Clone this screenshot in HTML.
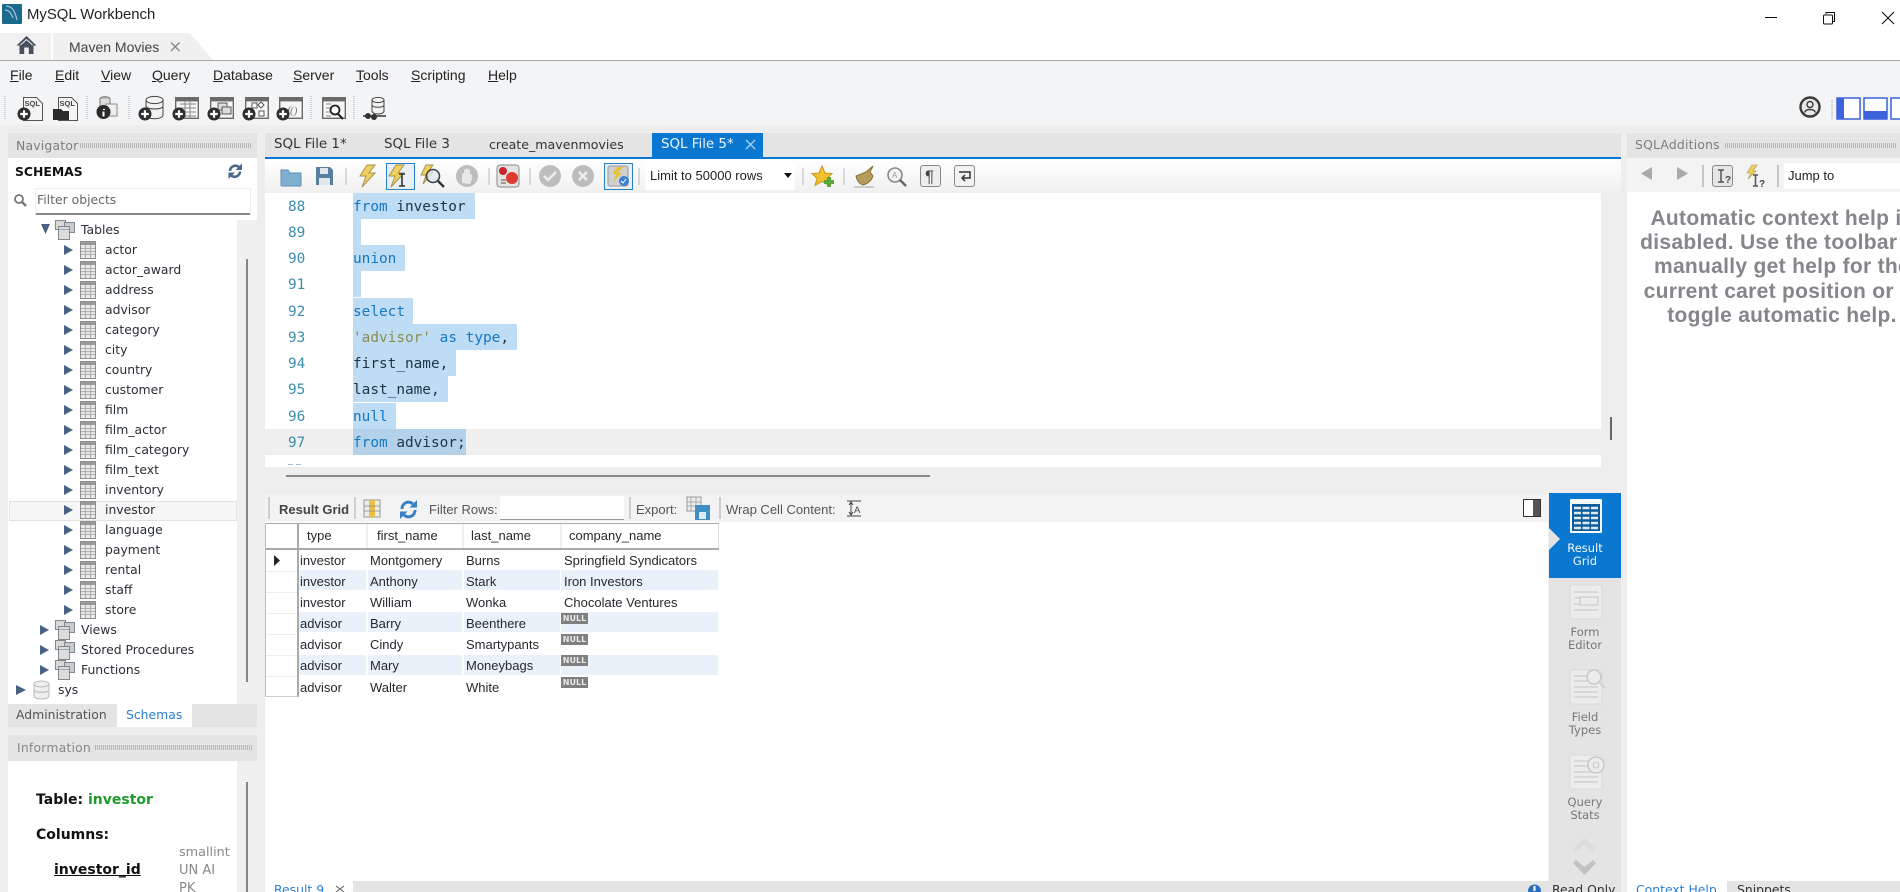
<!DOCTYPE html>
<html><head><meta charset="utf-8"><title>MySQL Workbench</title>
<style>
html,body{margin:0;padding:0;background:#fff}
#r{position:relative;width:1900px;height:892px;overflow:hidden;background:#eeeeef;font-family:"DejaVu Sans",sans-serif;font-size:12.4px;color:#2a2f36;filter:blur(.35px)}
.b{position:absolute}
.t{position:absolute;white-space:nowrap;line-height:20px}
.m{font-family:"Liberation Sans",sans-serif;font-size:14px;color:#222}
.m u{text-decoration-thickness:1px}
.g{font-family:"Liberation Sans",sans-serif;font-size:13px;color:#26292e}
.f{font-family:"Liberation Sans",sans-serif;font-size:13px;color:#555}
.h{color:#7c7c7c;font-size:12.4px;letter-spacing:.2px}
.c{font-family:"DejaVu Sans Mono",monospace;font-size:14.4px;color:#1c3444;line-height:26px;position:absolute;left:353px;white-space:pre}
.n{font-family:"DejaVu Sans Mono",monospace;font-size:14.4px;color:#3c8cab;line-height:26px;position:absolute;left:288px}
.k{color:#1478c2}.s{color:#8c8c52}
.sel{position:absolute;left:353px;background:#bfdcf5;height:26.2px}
.nul{position:absolute;left:561px;width:27px;height:11px;background:#808080;color:#e8e8e8;font:bold 8px/11px "DejaVu Sans",sans-serif;text-align:center}
.tab{font-size:13.4px;color:#333}
.side{position:absolute;left:1549px;width:72px;text-align:center;font-family:"DejaVu Sans",sans-serif;font-size:11.5px;line-height:13px;color:#777}
.help{position:absolute;left:1637px;width:290px;text-align:center;font:bold 21px/24.2px "Liberation Sans",sans-serif;color:#85868c;top:207px;letter-spacing:.3px;white-space:nowrap}
.bold{font-weight:bold;font-family:"DejaVu Sans",sans-serif;color:#111;font-size:14px}
</style></head><body>
<div id="r">
<!-- title and tab bar -->
<div class="b" style="left:0;top:0;width:1900px;height:60px;background:#fff"></div>
<div class="b" style="left:0;top:33px;width:51px;height:27px;background:#f1f1f1"></div>
<div class="b" style="left:53px;top:33px;width:160px;height:27px;background:#f0f0f0;clip-path:polygon(0 0,137px 0,160px 27px,0 27px)"></div>
<div class="b" style="left:0;top:60px;width:1900px;height:1px;background:#a9a9a9"></div>
<div class="b" style="left:0;top:61px;width:1900px;height:64px;background:#f3f4f6"></div>
<div class="t" style="left:27px;top:5px;font:14.9px/20px 'Liberation Sans',sans-serif;color:#222">MySQL Workbench</div>
<div class="t" style="left:69px;top:37px;font:14px/20px 'Liberation Sans',sans-serif;color:#444">Maven Movies</div>
<div class="t m" style="left:10px;top:65px"><u>F</u>ile</div>
<div class="t m" style="left:55px;top:65px"><u>E</u>dit</div>
<div class="t m" style="left:101px;top:65px"><u>V</u>iew</div>
<div class="t m" style="left:152px;top:65px"><u>Q</u>uery</div>
<div class="t m" style="left:213px;top:65px"><u>D</u>atabase</div>
<div class="t m" style="left:293px;top:65px"><u>S</u>erver</div>
<div class="t m" style="left:356px;top:65px"><u>T</u>ools</div>
<div class="t m" style="left:411px;top:65px"><u>S</u>cripting</div>
<div class="t m" style="left:488px;top:65px"><u>H</u>elp</div>

<!-- navigator -->
<div class="b" style="left:8px;top:133px;width:249px;height:25px;background:#e4e4e4"></div>
<div class="b" style="left:8px;top:158px;width:249px;height:62px;background:#fff"></div>
<div class="b" style="left:8px;top:220px;width:229px;height:484px;background:#fff"></div>
<div class="b" style="left:237px;top:220px;width:20px;height:484px;background:#f0f0f0"></div>
<div class="b" style="left:246px;top:259px;width:2px;height:423px;background:#858585"></div>
<div class="t h" style="left:16px;top:136px">Navigator</div>
<div class="t" style="left:15px;top:162px;font-weight:bold;font-size:12.4px;color:#111">SCHEMAS</div>
<div class="b" style="left:35px;top:188px;width:214px;height:24px;background:#fff;border:1px solid #eee;border-bottom:2px solid #8a8a8a;border-radius:2px;box-sizing:content-box"></div>
<div class="t" style="left:37px;top:190px;color:#666">Filter objects</div>
<div class="t" style="left:81px;top:220px">Tables</div>
<div class="b" style="left:9px;top:501px;width:226px;height:18px;background:#f6f6f6;border:1px solid #e2e2e2"></div>
<div class="t" style="left:105px;top:240px">actor</div>
<div class="t" style="left:105px;top:260px">actor_award</div>
<div class="t" style="left:105px;top:280px">address</div>
<div class="t" style="left:105px;top:300px">advisor</div>
<div class="t" style="left:105px;top:320px">category</div>
<div class="t" style="left:105px;top:340px">city</div>
<div class="t" style="left:105px;top:360px">country</div>
<div class="t" style="left:105px;top:380px">customer</div>
<div class="t" style="left:105px;top:400px">film</div>
<div class="t" style="left:105px;top:420px">film_actor</div>
<div class="t" style="left:105px;top:440px">film_category</div>
<div class="t" style="left:105px;top:460px">film_text</div>
<div class="t" style="left:105px;top:480px">inventory</div>
<div class="t" style="left:105px;top:500px">investor</div>
<div class="t" style="left:105px;top:520px">language</div>
<div class="t" style="left:105px;top:540px">payment</div>
<div class="t" style="left:105px;top:560px">rental</div>
<div class="t" style="left:105px;top:580px">staff</div>
<div class="t" style="left:105px;top:600px">store</div>
<div class="t" style="left:81px;top:620px">Views</div>
<div class="t" style="left:81px;top:640px">Stored Procedures</div>
<div class="t" style="left:81px;top:660px">Functions</div>
<div class="t" style="left:58px;top:680px">sys</div>
<div class="b" style="left:8px;top:704px;width:249px;height:23px;background:#e4e4e4"></div>
<div class="b" style="left:117px;top:704px;width:75px;height:23px;background:#fff"></div>
<div class="t" style="left:16px;top:705px;color:#555">Administration</div>
<div class="t" style="left:126px;top:705px;color:#2b7fd4">Schemas</div>
<div class="b" style="left:8px;top:735px;width:249px;height:26px;background:#e4e4e4"></div>
<div class="t h" style="left:17px;top:738px;color:#888">Information</div>
<div class="b" style="left:8px;top:761px;width:229px;height:131px;background:#fff"></div>
<div class="b" style="left:237px;top:761px;width:20px;height:131px;background:#f0f0f0"></div>
<div class="b" style="left:246px;top:782px;width:2px;height:110px;background:#858585"></div>
<div class="t bold" style="left:36px;top:790px">Table: <span style="color:#1f9a2c">investor</span></div>
<div class="t bold" style="left:36px;top:825px">Columns:</div>
<div class="t bold" style="left:54px;top:860px;text-decoration:underline">investor_id</div>
<div class="t" style="left:179px;top:843px;color:#8a8a8a;font-size:12.8px">smallint</div>
<div class="t" style="left:179px;top:861px;color:#8a8a8a;font-size:13px">UN AI</div>
<div class="t" style="left:179px;top:879px;color:#8a8a8a;font-size:13px">PK</div>

<!-- editor -->
<div class="b" style="left:265px;top:133px;width:1356px;height:24px;background:#e4e4e4"></div>
<div class="b" style="left:265px;top:157px;width:1356px;height:2px;background:#0a78d0"></div>
<div class="b" style="left:265px;top:159px;width:1356px;height:34px;background:linear-gradient(#fff,#f0f0f0)"></div>
<div class="b" style="left:652px;top:133px;width:111px;height:24px;background:#0a78d0"></div>
<div class="t tab" style="left:274px;top:135px">SQL File 1*</div>
<div class="t tab" style="left:384px;top:135px">SQL File 3</div>
<div class="t tab" style="left:489px;top:135px;font-size:12.6px">create_mavenmovies</div>
<div class="t tab" style="left:661px;top:135px;color:#eaf4ff">SQL File 5*</div>
<div class="b" style="left:645px;top:163px;width:150px;height:27px;background:#fff"></div>
<div class="t" style="left:650px;top:166px;font:13px/20px 'Liberation Sans',sans-serif;color:#222">Limit to 50000 rows</div>
<div class="b" style="left:386px;top:163px;width:27px;height:25px;border:1px solid #2a80c8;background:#e9eff4"></div>
<div class="b" style="left:604px;top:163px;width:27px;height:25px;border:1px solid #2a80c8;background:#e9eff4"></div>

<div class="b" style="left:265px;top:193px;width:1336px;height:274px;background:#fff;overflow:hidden"></div>
<div class="b" style="left:265px;top:429px;width:1336px;height:26px;background:#efefef"></div>
<div class="sel" style="top:193px;width:122px"></div>
<div class="sel" style="top:219px;width:8px"></div>
<div class="sel" style="top:245px;width:52px"></div>
<div class="sel" style="top:271px;width:8px"></div>
<div class="sel" style="top:298px;width:60px"></div>
<div class="sel" style="top:324px;width:164px"></div>
<div class="sel" style="top:350px;width:103px"></div>
<div class="sel" style="top:376px;width:95px"></div>
<div class="sel" style="top:403px;width:43px"></div>
<div class="sel" style="top:429px;width:113px;background:#b3d2e9"></div>
<div class="n" style="top:194px">88</div><div class="c" style="top:194px"><span class="k">from</span> investor</div>
<div class="n" style="top:220px">89</div>
<div class="n" style="top:246px">90</div><div class="c" style="top:246px"><span class="k">union</span></div>
<div class="n" style="top:272px">91</div>
<div class="n" style="top:299px">92</div><div class="c" style="top:299px"><span class="k">select</span></div>
<div class="n" style="top:325px">93</div><div class="c" style="top:325px"><span class="s">'advisor'</span> <span class="k">as</span> <span class="k">type</span>,</div>
<div class="n" style="top:351px">94</div><div class="c" style="top:351px">first_name,</div>
<div class="n" style="top:377px">95</div><div class="c" style="top:377px">last_name,</div>
<div class="n" style="top:404px">96</div><div class="c" style="top:404px"><span class="k">null</span></div>
<div class="n" style="top:430px">97</div><div class="c" style="top:430px"><span class="k">from</span> advisor;</div>
<div class="b" style="left:288px;top:464px;width:5px;height:1px;background:#9cc0d0"></div>
<div class="b" style="left:296px;top:464px;width:5px;height:1px;background:#9cc0d0"></div>
<div class="b" style="left:286px;top:475px;width:644px;height:2px;background:#8a8a8a"></div>
<div class="b" style="left:1610px;top:417px;width:2px;height:23px;background:#666"></div>

<!-- results -->
<div class="b" style="left:265px;top:494px;width:1283px;height:28px;background:#f3f3f3"></div>
<div class="b" style="left:265px;top:522px;width:1283px;height:359px;background:#fff"></div>
<div class="t f" style="left:279px;top:500px;font-weight:bold;color:#444;font-size:13px">Result Grid</div>
<div class="t f" style="left:429px;top:500px">Filter Rows:</div>
<div class="b" style="left:500px;top:496px;width:124px;height:23px;background:#fff;border-bottom:1px solid #999"></div>
<div class="t f" style="left:636px;top:500px">Export:</div>
<div class="t f" style="left:726px;top:500px">Wrap Cell Content:</div>
<!-- grid -->
<div class="b" style="left:265px;top:523px;width:454px;height:1px;background:#aaa"></div>
<div class="b" style="left:265px;top:524px;width:454px;height:24px;background:#fff"></div>
<div class="b" style="left:265px;top:548px;width:454px;height:2px;background:#aaa"></div>
<div class="b" style="left:297px;top:524px;width:2px;height:173px;background:#aaa"></div>
<div class="b" style="left:265px;top:523px;width:1px;height:174px;background:#bbb"></div>
<div class="b" style="left:366px;top:524px;width:2px;height:24px;background:#eee"></div>
<div class="b" style="left:462px;top:524px;width:2px;height:24px;background:#eee"></div>
<div class="b" style="left:560px;top:524px;width:2px;height:24px;background:#eee"></div>
<div class="b" style="left:718px;top:524px;width:1px;height:24px;background:#ddd"></div>
<div class="b" style="left:299px;top:570px;width:67px;height:20px;background:#e9f1fb"></div>
<div class="b" style="left:368px;top:570px;width:94px;height:20px;background:#e9f1fb"></div>
<div class="b" style="left:464px;top:570px;width:96px;height:20px;background:#e9f1fb"></div>
<div class="b" style="left:561px;top:570px;width:157px;height:20px;background:#e9f1fb"></div>
<div class="b" style="left:299px;top:612px;width:67px;height:20px;background:#e9f1fb"></div>
<div class="b" style="left:368px;top:612px;width:94px;height:20px;background:#e9f1fb"></div>
<div class="b" style="left:464px;top:612px;width:96px;height:20px;background:#e9f1fb"></div>
<div class="b" style="left:561px;top:612px;width:157px;height:20px;background:#e9f1fb"></div>
<div class="b" style="left:299px;top:655px;width:67px;height:20px;background:#e9f1fb"></div>
<div class="b" style="left:368px;top:655px;width:94px;height:20px;background:#e9f1fb"></div>
<div class="b" style="left:464px;top:655px;width:96px;height:20px;background:#e9f1fb"></div>
<div class="b" style="left:561px;top:655px;width:157px;height:20px;background:#e9f1fb"></div>
<div class="b" style="left:266px;top:571px;width:31px;height:1px;background:#eeeeee"></div>
<div class="b" style="left:266px;top:592px;width:31px;height:1px;background:#eeeeee"></div>
<div class="b" style="left:266px;top:613px;width:31px;height:1px;background:#eeeeee"></div>
<div class="b" style="left:266px;top:634px;width:31px;height:1px;background:#eeeeee"></div>
<div class="b" style="left:266px;top:655px;width:31px;height:1px;background:#eeeeee"></div>
<div class="b" style="left:266px;top:676px;width:31px;height:1px;background:#eeeeee"></div>
<div class="b" style="left:265px;top:696px;width:33px;height:1px;background:#ccc"></div>
<div class="t g" style="left:307px;top:526px">type</div>
<div class="t g" style="left:377px;top:526px">first_name</div>
<div class="t g" style="left:471px;top:526px">last_name</div>
<div class="t g" style="left:569px;top:526px">company_name</div>
<div class="t g" style="left:300px;top:551px">investor</div><div class="t g" style="left:370px;top:551px">Montgomery</div><div class="t g" style="left:466px;top:551px">Burns</div><div class="t g" style="left:564px;top:551px">Springfield Syndicators</div>
<div class="t g" style="left:300px;top:572px">investor</div><div class="t g" style="left:370px;top:572px">Anthony</div><div class="t g" style="left:466px;top:572px">Stark</div><div class="t g" style="left:564px;top:572px">Iron Investors</div>
<div class="t g" style="left:300px;top:593px">investor</div><div class="t g" style="left:370px;top:593px">William</div><div class="t g" style="left:466px;top:593px">Wonka</div><div class="t g" style="left:564px;top:593px">Chocolate Ventures</div>
<div class="t g" style="left:300px;top:614px">advisor</div><div class="t g" style="left:370px;top:614px">Barry</div><div class="t g" style="left:466px;top:614px">Beenthere</div><div class="nul" style="top:613px">NULL</div>
<div class="t g" style="left:300px;top:635px">advisor</div><div class="t g" style="left:370px;top:635px">Cindy</div><div class="t g" style="left:466px;top:635px">Smartypants</div><div class="nul" style="top:634px">NULL</div>
<div class="t g" style="left:300px;top:656px">advisor</div><div class="t g" style="left:370px;top:656px">Mary</div><div class="t g" style="left:466px;top:656px">Moneybags</div><div class="nul" style="top:655px">NULL</div>
<div class="t g" style="left:300px;top:678px">advisor</div><div class="t g" style="left:370px;top:678px">Walter</div><div class="t g" style="left:466px;top:678px">White</div><div class="nul" style="top:677px">NULL</div>

<!-- result side tabs -->
<div class="b" style="left:1549px;top:493px;width:72px;height:388px;background:#e4e4e4"></div>
<div class="b" style="left:1549px;top:493px;width:72px;height:85px;background:#0a78d0;clip-path:polygon(0 0,100% 0,100% 100%,0 100%,0 57px,11px 46px,0 35px)"></div>
<div class="side" style="top:542px;color:#f2f8ff">Result<br>Grid</div>
<div class="side" style="top:626px">Form<br>Editor</div>
<div class="side" style="top:711px">Field<br>Types</div>
<div class="side" style="top:796px">Query<br>Stats</div>
<!-- bottom bar -->
<div class="b" style="left:265px;top:881px;width:1356px;height:11px;background:#e4e4e4"></div>
<div class="b" style="left:265px;top:881px;width:88px;height:11px;background:#fff"></div>
<div class="t" style="left:274px;top:880px;color:#2b7fd4;font-size:12.4px">Result 9</div>
<div class="t" style="left:1552px;top:880px;color:#333;font-size:12.4px">Read Only</div>

<!-- right panel -->
<div class="b" style="left:1627px;top:133px;width:273px;height:25px;background:#e4e4e4"></div>
<div class="b" style="left:1627px;top:158px;width:273px;height:34px;background:#f3f3f3"></div>
<div class="b" style="left:1627px;top:192px;width:273px;height:700px;background:#fff"></div>
<div class="t h" style="left:1635px;top:135px">SQLAdditions</div>
<div class="b" style="left:1784px;top:163px;width:116px;height:26px;background:#fff"></div>
<div class="t" style="left:1788px;top:166px;font:13px/20px 'Liberation Sans',sans-serif;color:#222">Jump to</div>
<div class="help">Automatic context help is<br>disabled. Use the toolbar to<br>manually get help for the<br>current caret position or to<br>toggle automatic help.</div>
<div class="b" style="left:1627px;top:881px;width:273px;height:11px;background:#e4e4e4"></div>
<div class="b" style="left:1627px;top:881px;width:100px;height:11px;background:#fff"></div>
<div class="t" style="left:1636px;top:880px;color:#2b7fd4;font-size:12.4px">Context Help</div>
<div class="t" style="left:1737px;top:880px;color:#333;font-size:12.4px">Snippets</div>

<!-- icons -->
<svg class="b" style="left:0;top:0" width="1900" height="892" viewBox="0 0 1900 892">
<defs>
<symbol id="tbl" width="16" height="18" viewBox="0 0 16 18"><rect x=".5" y=".5" width="15" height="17" fill="#e8e8e8" stroke="#8f8f8f"/><rect x="1" y="1" width="14" height="3" fill="#9a9a9a"/><path d="M1 7.500h14M1 10.500h14M1 13.500h14M5.500 4v13M10.500 4v13" stroke="#b0b0b0" fill="none"/></symbol>
<symbol id="grp" width="20" height="20" viewBox="0 0 20 20"><rect x=".5" y=".5" width="10" height="9" fill="#d8d8d8" stroke="#808890"/><rect x="9.500" y="2.500" width="10" height="10" fill="#c8ccd0" stroke="#808890"/><rect x="3.500" y="6.500" width="11" height="13" fill="#dcdcdc" stroke="#808890"/><path d="M4 9.500h10" stroke="#9aa" /></symbol>
<symbol id="add" width="14" height="14" viewBox="0 0 14 14"><circle cx="7" cy="7" r="6.500" fill="#2e2e2e"/><path d="M7 3.200v7.600M3.200 7h7.600" stroke="#fff" stroke-width="2.200"/></symbol>
<symbol id="win" width="24" height="22" viewBox="0 0 24 22"><rect x=".7" y=".7" width="22.600" height="20.600" fill="#f6f6f6" stroke="#6a6a6a" stroke-width="1.400"/><rect x="1" y="1" width="22" height="3.400" fill="#6a6a6a"/></symbol>
</defs>
<!-- logo -->
<rect x="2" y="4" width="20" height="20" rx="1" fill="#1a6a8e"/><path d="M6 6c6 0 9 5 11 14M5 10c4 0 6 3 8 8" stroke="#9cc4d6" fill="none" stroke-width="1.300"/>
<!-- home -->
<path d="M26.500 36L36.500 45.500H33.500V54H28.800V47.500H24.200V54H19.500V45.500H16.500Z" fill="#45505c"/><path d="M20.500 45l6-5.500 6 5.500" fill="none" stroke="#f1f1f1"/>
<!-- maven tab close -->
<path d="M171 42.500l8.500 8.500m0-8.500l-8.500 8.500" stroke="#888" stroke-width="1.400"/>
<!-- window controls -->
<path d="M1765 17.500h12" stroke="#111"/>
<rect x="1823.500" y="15" width="9" height="9" rx="1" fill="none" stroke="#111"/><path d="M1826 14v-1.500h8.500v9H1833" fill="none" stroke="#111"/>
<path d="M1882 12l12 12m0-12l-12 12" stroke="#111" stroke-width="1.100"/>
<!-- main toolbar -->
<path d="M5 96v24" stroke="#aab" stroke-dasharray="1 1"/>
<g fill="none" stroke="#555">
<path d="M23.500 97.500h13l6 6v17h-19z" fill="#f4f4f4"/><path d="M58.500 97.500h13l6 6v17h-19z" fill="#f4f4f4"/>
</g>
<g font-family="Liberation Sans,sans-serif" font-size="7.500" font-weight="bold" fill="#444"><text x="24.500" y="106">SQL</text><text x="59.500" y="106">SQL</text></g>
<use href="#add" x="17" y="107"/>
<path d="M53 109h8l2 2h6v9H53z" fill="#2b2b2b"/>
<path d="M87 96v24" stroke="#aab" stroke-dasharray="1 1"/>
<ellipse cx="105" cy="99" rx="5" ry="2.400" fill="#bbb" stroke="#777"/><path d="M100 99v8h10v-8" fill="#ddd" stroke="#777"/><rect x="106" y="104" width="11" height="12" fill="#eee" stroke="#888"/><circle cx="103.500" cy="112" r="7" fill="#2a2a2a"/><path d="M104 109v1M103.500 111.500v5" stroke="#fff" stroke-width="2"/>
<path d="M129 96v24" stroke="#aab" stroke-dasharray="1 1"/>
<path d="M146 100v15c0 5 17 5 17 0v-15z" fill="#f2f2f2" stroke="#444"/><ellipse cx="154.500" cy="100" rx="8.500" ry="3.600" fill="#f2f2f2" stroke="#444"/><path d="M146 106c0 4 17 4 17 0" fill="none" stroke="#444"/><use href="#add" x="138" y="107"/>
<use href="#win" x="175" y="97"/><path d="M180 104h16M180 108h16M180 112h16M180 116h16M185 101v17M190 101v17" stroke="#888"/><use href="#add" x="172" y="107"/>
<use href="#win" x="210" y="97"/><rect x="218" y="103" width="9" height="7" fill="#ddd" stroke="#555"/><rect x="222" y="107" width="9" height="7" fill="#ddd" stroke="#555"/><use href="#add" x="207" y="107"/>
<use href="#win" x="245" y="97"/><rect x="252" y="103" width="5" height="5" fill="#fff" stroke="#555"/><path d="M261 102l3 3-3 3-3-3z" fill="#fff" stroke="#555"/><rect x="259" y="111" width="5" height="5" fill="#fff" stroke="#555"/><use href="#add" x="242" y="107"/>
<use href="#win" x="279" y="97"/><text x="287" y="114" font-size="11" fill="#777" font-family="Liberation Serif,serif" font-style="italic">f()</text><use href="#add" x="276" y="107"/>
<path d="M311 96v24" stroke="#aab" stroke-dasharray="1 1"/>
<use href="#win" x="322" y="97"/><path d="M326 104h5M326 108h5M326 112h5M326 116h5" stroke="#888"/><circle cx="335" cy="110" r="4.500" fill="#fff" stroke="#222" stroke-width="1.800"/><path d="M338 114l5 5" stroke="#222" stroke-width="2"/>
<path d="M354 96v24" stroke="#aab" stroke-dasharray="1 1"/>
<path d="M372 100v11c0 4 12 4 12 0v-11z" fill="#f2f2f2" stroke="#444"/><ellipse cx="378" cy="100" rx="6" ry="2.600" fill="#f2f2f2" stroke="#444"/><path d="M372 105c0 3 12 3 12 0" fill="none" stroke="#444"/><path d="M363 116h23" stroke="#333" stroke-width="1.500"/><circle cx="368" cy="116" r="3" fill="#333"/><circle cx="374" cy="117" r="3" fill="#333"/>
<!-- right top -->
<circle cx="1810" cy="107" r="9.500" fill="#e8e8e8" stroke="#3a3a3a" stroke-width="2.400"/><circle cx="1810" cy="104.500" r="3" fill="none" stroke="#3a3a3a" stroke-width="1.400"/><path d="M1804.500 112.500c1.500-4 9.500-4 11 0" fill="none" stroke="#3a3a3a" stroke-width="1.400"/>
<path d="M1832 100v20" stroke="#99a" stroke-dasharray="1 1"/>
<rect x="1837" y="98" width="23" height="21" fill="#fff" stroke="#3c62dc" stroke-width="1.500"/><rect x="1837" y="98" width="7" height="21" fill="#3c62dc"/>
<rect x="1864" y="98" width="23" height="21" fill="#fff" stroke="#3c62dc" stroke-width="1.500"/><rect x="1864" y="111" width="23" height="8" fill="#3c62dc"/>
<rect x="1891" y="98" width="23" height="21" fill="#fff" stroke="#3c62dc" stroke-width="1.500"/><rect x="1908" y="98" width="7" height="21" fill="#3c62dc"/>
<!-- header gripper dots -->
<g stroke="#b6b6b6" stroke-width="5" stroke-dasharray="1 1"><path d="M80 145.500h172"/><path d="M95 747.500h157"/><path d="M1725 145.500h172"/></g>
<!-- schemas icons -->
<path d="M230 171a5.500 5.500 0 0 1 9-4" fill="none" stroke="#4a6a88" stroke-width="2.600"/><path d="M242 163.500v6.500h-6.500z" fill="#4a6a88"/><path d="M240 171.500a5.500 5.500 0 0 1-9 4" fill="none" stroke="#4a6a88" stroke-width="2.600"/><path d="M228.500 179v-6.500h6.500z" fill="#4a6a88"/>
<circle cx="19" cy="199" r="4" fill="none" stroke="#777" stroke-width="1.800"/><path d="M22 202l4 4" stroke="#777" stroke-width="2.400"/>
<!-- tree arrows -->
<path d="M41 224h9l-4.500 10z" fill="#4a6282"/>
<g fill="#4a6282"><path d="M64 245l9 5-9 5z"/><path d="M64 265l9 5-9 5z"/><path d="M64 285l9 5-9 5z"/><path d="M64 305l9 5-9 5z"/><path d="M64 325l9 5-9 5z"/><path d="M64 345l9 5-9 5z"/><path d="M64 365l9 5-9 5z"/><path d="M64 385l9 5-9 5z"/><path d="M64 405l9 5-9 5z"/><path d="M64 425l9 5-9 5z"/><path d="M64 445l9 5-9 5z"/><path d="M64 465l9 5-9 5z"/><path d="M64 485l9 5-9 5z"/><path d="M64 505l9 5-9 5z"/><path d="M64 525l9 5-9 5z"/><path d="M64 545l9 5-9 5z"/><path d="M64 565l9 5-9 5z"/><path d="M64 585l9 5-9 5z"/><path d="M64 605l9 5-9 5z"/><path d="M40 625l9 5-9 5z"/><path d="M40 645l9 5-9 5z"/><path d="M40 665l9 5-9 5z"/><path d="M16 685l10 5-10 5z"/></g>
<use href="#grp" x="55" y="220"/><use href="#grp" x="55" y="620"/><use href="#grp" x="55" y="640"/><use href="#grp" x="55" y="660"/>
<use href="#tbl" x="80" y="241"/><use href="#tbl" x="80" y="261"/><use href="#tbl" x="80" y="281"/><use href="#tbl" x="80" y="301"/><use href="#tbl" x="80" y="321"/><use href="#tbl" x="80" y="341"/><use href="#tbl" x="80" y="361"/><use href="#tbl" x="80" y="381"/><use href="#tbl" x="80" y="401"/><use href="#tbl" x="80" y="421"/><use href="#tbl" x="80" y="441"/><use href="#tbl" x="80" y="461"/><use href="#tbl" x="80" y="481"/><use href="#tbl" x="80" y="501"/><use href="#tbl" x="80" y="521"/><use href="#tbl" x="80" y="541"/><use href="#tbl" x="80" y="561"/><use href="#tbl" x="80" y="581"/><use href="#tbl" x="80" y="601"/>
<path d="M34 684v12c0 4 15 4 15 0v-12z" fill="#eee" stroke="#bbb"/><ellipse cx="41.500" cy="684" rx="7.500" ry="3" fill="#eee" stroke="#bbb"/><path d="M34 690c0 3 15 3 15 0" fill="none" stroke="#bbb"/>
<!-- editor toolbar -->
<path d="M281 170h7l2 3h11v12a1 1 0 0 1-1 1h-18a1 1 0 0 1-1-1z" fill="#7fb0cf" stroke="#5f8fb0"/>
<path d="M316 167h14l3 3v15h-17z" fill="#5a7f9e"/><rect x="320" y="168" width="8" height="6" fill="#dfe8ee"/><rect x="319" y="178" width="11" height="7" fill="#dfe8ee"/>
<path d="M346 168v17" stroke="#bbb"/>
<path d="M367 165h8l-6 8h6l-13 14 4-11h-6z" fill="#efd060" stroke="#a8924a"/>
<path d="M396 165h8l-6 8h6l-13 14 4-11h-6z" fill="#efd060" stroke="#a8924a"/><path d="M399 174h6M402 174v12M399 186h6" stroke="#333" stroke-width="1.600"/>
<path d="M426 165h7l-5 7h5l-10 12 3-9h-5z" fill="#efd060" stroke="#a8924a"/><circle cx="433" cy="176" r="6.500" fill="#dce8f0" fill-opacity=".8" stroke="#444" stroke-width="1.600"/><path d="M438 181l6 6" stroke="#333" stroke-width="2.400"/>
<circle cx="467" cy="176" r="11" fill="#bdbdbd"/><path d="M462 183v-9c0-1 2-1 2 0v-4c0-1 2-1 2 0v-1c0-1 2-1 2 0v1c0-1 2-1 2 0v5c0-1 2-1 2 0v4l-2 5z" fill="#e8e8e8"/>
<path d="M489 168v17" stroke="#bbb"/>
<rect x="497" y="165" width="22" height="22" rx="3" fill="#e4e4e4" stroke="#8a8a8a"/><circle cx="503" cy="171" r="4" fill="#c8242a"/><circle cx="512" cy="178" r="6" fill="#e03a30"/><path d="M501 180h5M501 183h5" stroke="#555"/>
<path d="M530 168v17" stroke="#bbb"/>
<circle cx="550" cy="176" r="11" fill="#bdbdbd"/><path d="M544 176l4 4 8-8" fill="none" stroke="#eee" stroke-width="2.400"/>
<circle cx="583" cy="176" r="11" fill="#bdbdbd"/><path d="M579 172l8 8m0-8l-8 8" stroke="#eee" stroke-width="2.400"/>
<rect x="608" y="166" width="20" height="20" rx="2" fill="#d0d0d0" stroke="#999"/><path d="M617 167h6l-5 6h4l-9 9 3-8h-4z" fill="#e8c23a"/><circle cx="624" cy="181" r="5" fill="#3e7fd0"/><path d="M621 181l2 2 3-4" fill="none" stroke="#fff"/>
<path d="M639 168v17" stroke="#bbb"/>
<path d="M784 173h8l-4 5z" fill="#111"/><path d="M803 168v17" stroke="#bbb"/>
<path d="M822 166l3 7 7 .5-5 5 2 7-7-4-7 4 2-7-5-5 7-.5z" fill="#f0c030" stroke="#c89a20"/><path d="M829 177v10M824 182h10" stroke="#5aa838" stroke-width="4"/>
<path d="M844 168v17" stroke="#bbb"/>
<path d="M873 166l-7 6-10 4c1 5 4 8 7 9 4-1 8-3 10-9l-3-4z" fill="#b89a5a" stroke="#8a7038"/><path d="M854 187h20" stroke="#ccc" stroke-width="2"/>
<circle cx="895" cy="175" r="7" fill="#f4f4f4" stroke="#888" stroke-width="1.600"/><path d="M900 180l6 6" stroke="#666" stroke-width="2.400"/><text x="892" y="178" font-size="8" fill="#999" font-family="Liberation Sans,sans-serif">A</text>
<rect x="920.500" y="165.500" width="20" height="21" rx="2.500" fill="#eee" stroke="#888"/><text x="925" y="182" font-size="17" fill="#444" font-family="Liberation Sans,sans-serif">¶</text>
<rect x="954.500" y="165.500" width="20" height="21" rx="2.500" fill="#f2f2f2" stroke="#888"/><path d="M959 172h11v6h-7M965 175l-3 3 3 3" fill="none" stroke="#333" stroke-width="1.500"/>
<path d="M746 140l9 9m0-9l-9 9" stroke="#a8d0f0" stroke-width="1.300"/>
<!-- results toolbar -->
<path d="M269 497v22M355 497v22M630 497v22M720 497v22" stroke="#aaa"/>
<rect x="364" y="500" width="16" height="17" fill="#eee" stroke="#999"/><rect x="369" y="500" width="6" height="17" fill="#eec040"/><path d="M364 506h16M364 511h16" stroke="#999"/>
<path d="M402 509a6.500 6.500 0 0 1 11-5" fill="none" stroke="#3b7fc8" stroke-width="3"/><path d="M417 500v7.500h-7.500z" fill="#3b7fc8"/><path d="M415 510a6.500 6.500 0 0 1-11 5" fill="none" stroke="#3b7fc8" stroke-width="3"/><path d="M400 519v-7.500h7.500z" fill="#3b7fc8"/>
<rect x="687" y="497" width="14" height="14" fill="#eee" stroke="#999"/><path d="M691 497v14M696 497v14M687 502h14M687 506h14" stroke="#aaa"/><rect x="695" y="505" width="15" height="15" fill="#3f8fc4"/><rect x="699" y="512" width="7" height="7" fill="#dcecf6"/>
<path d="M847 501h14M847 516h14M851 503v11M849 505l2-3 2 3M849 512l2 3 2-3" fill="none" stroke="#444"/><text x="854" y="513" font-size="9.500" fill="#444" font-family="Liberation Sans,sans-serif">A</text>
<rect x="1523.500" y="499.500" width="17" height="17" fill="#fff" stroke="#333"/><rect x="1533" y="500" width="7" height="16" fill="#555"/>
<!-- grid arrow -->
<path d="M274 555l6 5.500-6 5.500z" fill="#222"/>
<!-- side icons -->
<rect x="1570" y="499" width="32" height="34" rx="1" fill="#f4f8fb"/><rect x="1572" y="504" width="28" height="27" fill="#0a5d9a"/><path d="M1574 508h24M1574 513h24M1574 518h24M1574 523h24M1574 528h24" stroke="#dfeaf2" stroke-width="2.400" stroke-dasharray="7 1.500"/>
<rect x="1570" y="585" width="32" height="34" rx="1" fill="#ececec" stroke="#dadada"/><path d="M1574 592h24M1574 598h6M1580 597h18v8h-18zM1574 604h6M1574 610h24" fill="none" stroke="#c4c4c4"/>
<rect x="1570" y="670" width="32" height="34" rx="1" fill="#ececec" stroke="#dadada"/><path d="M1574 676h14M1574 681h14M1574 687h24M1574 692h24M1574 697h24" stroke="#c4c4c4"/><circle cx="1594" cy="677" r="7" fill="#ececec" stroke="#c8c8c8" stroke-width="1.600"/><path d="M1599 682l6 6" stroke="#cfcfcf" stroke-width="2"/>
<rect x="1570" y="755" width="32" height="34" rx="1" fill="#ececec" stroke="#dadada"/><path d="M1574 761h14M1574 766h14M1574 772h24M1574 777h24M1574 782h24" stroke="#c4c4c4"/><circle cx="1596" cy="765" r="8" fill="#ececec" stroke="#c8c8c8" stroke-width="1.600"/><circle cx="1596" cy="765" r="3" fill="none" stroke="#c8c8c8"/>
<path d="M1573 849l11.500-11 11.500 11-3 3-8.500-7-8.500 7z" fill="#dcdcdc"/>
<path d="M1573 863l3-3 8.500 7 8.500-7 3 3-11.500 12z" fill="#c2c2c2"/>
<circle cx="1534.500" cy="891" r="6.500" fill="#2a6fc0"/><path d="M1534.500 886v5" stroke="#fff" stroke-width="2"/>
<path d="M336 886l8 6m0-6l-8 6" stroke="#777" stroke-width="1.200"/>
<!-- right toolbar -->
<path d="M1652 167v13l-11-6.500z" fill="#aaa"/><path d="M1677 167v13l11-6.500z" fill="#aaa"/>
<path d="M1703 165v22M1778 165v22" stroke="#999"/>
<rect x="1712.500" y="165.500" width="20" height="21" rx="2.500" fill="#e6e6e6" stroke="#888"/><path d="M1718 170h6M1721 170v12M1718 182h6" stroke="#555" stroke-width="1.500"/><text x="1725" y="183" font-size="10" font-weight="bold" fill="#444" font-family="Liberation Sans,sans-serif">?</text>
<path d="M1752 165h5l-4 6h3l-8 8 3-6h-4z" fill="#efd060" stroke="#a8924a" stroke-width=".6"/><path d="M1753 175h5M1755.500 175v11M1753 186h5" stroke="#555" stroke-width="1.500"/><text x="1759" y="187" font-size="10" font-weight="bold" fill="#444" font-family="Liberation Sans,sans-serif">?</text>
</svg>
</div>
</body></html>
